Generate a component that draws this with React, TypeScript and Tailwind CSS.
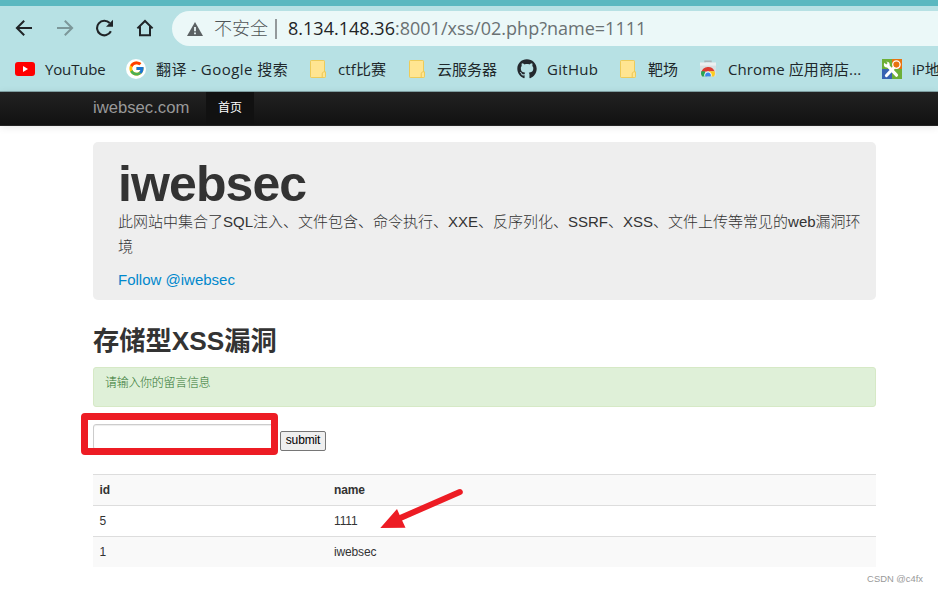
import type { ReactNode } from 'react'
import { FaGithub } from 'react-icons/fa'
import { FcGoogle } from 'react-icons/fc'

interface BookmarkProps {
  icon: ReactNode
  label: string
  className: string
  labelClassName: string
}

const rows = [
  { id: '5', name: '1111' },
  { id: '1', name: 'iwebsec' },
]

function BackIcon({ className }: { className: string }) {
  return (
    <svg viewBox="0 0 18 18" className={className} fill="none" stroke="currentColor" strokeWidth="2">
      <path d="M17 9H2.2M9.2 1.7 1.9 9l7.3 7.3" />
    </svg>
  )
}

function ReloadIcon() {
  return (
    <svg viewBox="0 0 20 18" className="h-[18px] w-5 text-[#202427]">
      <path d="M15.9 12.3A7.3 7.3 0 1 1 14.7 4" fill="none" stroke="currentColor" strokeWidth="2.1" />
      <path d="M18 .8v7h-7z" fill="currentColor" />
    </svg>
  )
}

function HomeIcon() {
  return (
    <svg viewBox="0 0 18 18" className="size-[18px] text-[#202427]" fill="none" stroke="currentColor" strokeWidth="2">
      <path d="M1.4 9.4 9 2l7.6 7.4M4 7.5v8.7h10V7.5" />
    </svg>
  )
}

function WarningIcon() {
  return (
    <svg viewBox="0 0 16 14" className="h-[14px] w-4">
      <path d="M8 0 16 14H0z" fill="#5b6163" />
      <path d="M7.1 5h1.8v4.2H7.1zM7.1 10.4h1.8v1.8H7.1z" fill="#ebf8f8" />
    </svg>
  )
}

function YoutubeIcon() {
  return (
    <svg viewBox="0 0 20 14" className="h-[14px] w-5">
      <rect width="20" height="14" rx="3" fill="#f00" />
      <path d="M8 4v6l5-3z" fill="#fff" />
    </svg>
  )
}

function FolderIcon() {
  return (
    <svg viewBox="0 0 16 18" className="h-[18px] w-4">
      <path d="M.5 1.2Q.5.5 1.2.5h12.6q.7 0 .7.7v10.6h1v5q0 .7-.7.7H1.2q-.7 0-.7-.7z" fill="#ffe591" stroke="#edcb58" />
      <path d="M12.2 17.3v-3.6q0-1.2 1.2-1.6l1.1-.4" fill="none" stroke="#edc651" />
    </svg>
  )
}

function StoreIcon() {
  return (
    <svg viewBox="0 0 16 17" className="h-[17px] w-4">
      <path d="M5 3V1.3h6V3" fill="none" stroke="#a9b4b8" strokeWidth="1.4" />
      <path d="M0 2.6h16v12.9q0 1-1 1H1q-1 0-1-1z" fill="#d9dfe1" />
      <path d="M0 2.6h16v3H0z" fill="#eceff0" />
      <path d="M1.4 12.3a7 7 0 0 1 13.2-1H8z" fill="#dd3b32" />
      <path d="M1.2 11.2h3.5l2.4 5.3H2q-1.6-2.4-.8-5.3z" fill="#2aa552" />
      <path d="M9 11.2h5.7q.8 2.9-.6 5.3H9z" fill="#fccd20" />
      <path d="M4.4 16.5a3.8 3.8 0 1 1 7.2 0z" fill="#f3f7fb" />
      <path d="M5.3 16.5a2.9 2.9 0 1 1 5.4 0z" fill="#3c87ea" />
    </svg>
  )
}

function ToolsIcon() {
  return (
    <svg viewBox="0 0 20 20" className="size-5">
      <path d="M0 0h20v20H0z" fill="#6caf37" />
      <path d="M10 0h10v10H10z" fill="#e8720e" />
      <path d="M0 10h10v10H0z" fill="#3763b2" />
      <path d="m5 6 9.5 10.2M12 8.5 4.5 16.5" stroke="#fff" strokeWidth="3.2" strokeLinecap="round" />
      <circle cx="4.8" cy="5.6" r="2.9" fill="#fff" />
      <path d="m1.3 2.8 1.5-1.5 2.9 2.8-1.4 1.5z" fill="#6caf37" />
      <circle cx="14.4" cy="5.6" r="3.7" fill="#e8720e" stroke="#fff" strokeWidth="1.3" />
    </svg>
  )
}

function Bookmark({ icon, label, className, labelClassName }: BookmarkProps) {
  return (
    <div className={`flex shrink-0 items-center ${className}`}>
      {icon}
      <span className={`pt-px whitespace-nowrap ${labelClassName}`}>{label}</span>
    </div>
  )
}

function BrowserBar() {
  return (
    <div className="h-[92px] border-t-[6px] border-b border-t-[#5bb8c0] border-b-[#83a4a7] bg-[#b7e1e4] font-['Open_Sans','Noto_Sans_CJK_SC',sans-serif]">
      <div className="flex h-10 items-center pt-[5px] pl-[15px]">
        <BackIcon className="mb-[2px] size-[18px] text-[#202427]" />
        <BackIcon className="mb-[2px] ml-[23px] size-[18px] rotate-180 text-[#7c9799]" />
        <div className="mb-px ml-[21px]">
          <ReloadIcon />
        </div>
        <div className="mb-px ml-[20.5px]">
          <HomeIcon />
        </div>
        <div className="ml-[18.5px] flex h-[35px] flex-1 items-center rounded-l-full bg-[#ebf8f8] pl-[15px] text-[18px] whitespace-nowrap text-[#6a7173]">
          <WarningIcon />
          <span className="ml-[11px] font-light text-[#4f5557]">不安全</span>
          <span className="ml-[7px] h-5 w-0.5 bg-[#93999b]" />
          <span className="ml-[11px] tracking-[0.01px]">
            <span className="text-[#1f2325]">8.134.148.36</span>:8001/xss/02.php?name=1111
          </span>
        </div>
      </div>
      <div className="flex h-[45px] items-center overflow-hidden pl-[15px] text-[15px] text-[#20282b]">
        <Bookmark icon={<YoutubeIcon />} label="YouTube" className="w-[111px]" labelClassName="ml-[10px] tracking-[-0.15px]" />
        <Bookmark
          icon={
            <span className="flex size-5 items-center justify-center rounded-full bg-white">
              <FcGoogle className="size-[17px]" />
            </span>
          }
          label="翻译 - Google 搜索"
          className="w-[184px]"
          labelClassName="ml-[10px] tracking-[0.45px]"
        />
        <Bookmark icon={<FolderIcon />} label="ctf比赛" className="w-[99px]" labelClassName="ml-3 tracking-[0.1px]" />
        <Bookmark icon={<FolderIcon />} label="云服务器" className="w-[108px]" labelClassName="ml-3" />
        <Bookmark
          icon={<FaGithub className="size-5 text-[#24292e]" />}
          label="GitHub"
          className="w-[103px]"
          labelClassName="ml-[10px] tracking-[0.3px]"
        />
        <Bookmark icon={<FolderIcon />} label="靶场" className="w-20" labelClassName="ml-3" />
        <Bookmark icon={<StoreIcon />} label="Chrome 应用商店..." className="w-[182px]" labelClassName="ml-3 tracking-[0.1px]" />
        <Bookmark icon={<ToolsIcon />} label="iP地" className="w-20" labelClassName="ml-[10px]" />
      </div>
    </div>
  )
}

function Hero() {
  return (
    <section className="h-[158px] rounded-[5px] bg-[#eee] pt-[17px] pr-[14px] pl-[25px] text-[15px] leading-[25px] text-[#333]">
      <h1 className="text-[50px] leading-[50px] font-bold tracking-[-0.9px]">iwebsec</h1>
      <p className="font-light">
        此网站中集合了SQL注入、文件包含、命令执行、XXE、反序列化、SSRF、XSS、文件上传等常见的web漏洞环境
      </p>
      <p className="mt-2">
        <a className="text-[#0088cc]">Follow @iwebsec</a>
      </p>
    </section>
  )
}

function MessageForm() {
  return (
    <form className="relative mt-[17px] flex h-[50px] items-start">
      <input className="h-[26px] w-[183px] rounded-[3px] border border-[#ccc] bg-white shadow-[inset_0_1px_1px_rgba(0,0,0,0.075)]" />
      <button
        type="button"
        className="mt-[7px] ml-1 h-5 w-[46px] rounded-[2px] border border-[#767676] bg-[#efefef] pb-[2px] leading-[16px] tracking-[-0.15px] text-black"
      >
        submit
      </button>
      <div className="absolute top-[-11px] -left-3 h-[42px] w-[197px] rounded-[4px] border-[7px] border-[#ed1c24]" />
    </form>
  )
}

function MessageTable() {
  return (
    <div className="relative">
      <table className="w-full table-fixed border-separate border-spacing-0 text-left leading-[17px] tracking-[-0.15px]">
        <thead>
          <tr className="h-[31px] bg-[#f9f9f9]">
            <th className="w-[234.5px] border-t border-[#ddd] pl-[6.5px] font-bold">id</th>
            <th className="border-t border-[#ddd] pl-[6.5px] font-bold">name</th>
          </tr>
        </thead>
        <tbody>
          {rows.map((row) => (
            <tr key={row.id} className="h-[31px] even:bg-[#f9f9f9]">
              <td className="border-t border-[#ddd] pl-[6.5px]">{row.id}</td>
              <td className="border-t border-[#ddd] pl-[6.5px]">{row.name}</td>
            </tr>
          ))}
        </tbody>
      </table>
      <svg viewBox="0 0 84 41" className="absolute top-[14px] left-[287px] h-[41px] w-[84px]">
        <path d="M79.8 4 18 31" stroke="#ed1c24" strokeWidth="6" strokeLinecap="round" />
        <path d="M.3 40 17 21l3.5 8 5 10.8z" fill="#ed1c24" />
      </svg>
    </div>
  )
}

export default function App() {
  return (
    <div className="h-[592px] w-[938px] overflow-hidden bg-white font-['Liberation_Sans','Noto_Sans_CJK_SC',sans-serif] text-[12px] text-[#333]">
      <BrowserBar />
      <nav className="flex h-[34px] items-center border-b border-[#252525] bg-linear-to-b from-[#222] to-[#111] pl-[93px] shadow-[0_1px_8px_rgba(0,0,0,0.1)]">
        <span className="w-[113px] pb-[2px] text-[16.67px] text-[#999]">iwebsec.com</span>
        <span className="flex h-[33px] w-12 items-center justify-center bg-[#111] pb-[2px] text-white">首页</span>
      </nav>
      <main className="ml-[93px] w-[783px] pt-4">
        <Hero />
        <h3 className="mt-[25px] text-[26.25px] leading-[33px] font-bold">存储型XSS漏洞</h3>
        <div className="mt-[9px] h-10 rounded-[3px] border border-[#d6e9c6] bg-[#dff0d8] pt-[7px] pl-[11px] leading-[17px] font-light tracking-[-0.3px] text-[#2f7530]">
          请输入你的留言信息
        </div>
        <MessageForm />
        <MessageTable />
      </main>
      <footer className="mt-1 pr-[15px] text-right text-[9.4px] leading-[16px] text-[#999]">CSDN @c4fx</footer>
    </div>
  )
}
